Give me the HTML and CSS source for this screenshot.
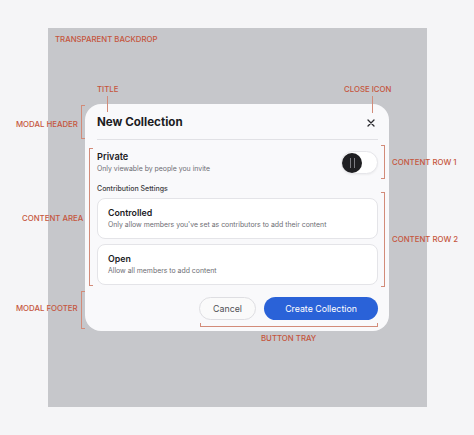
FILE: index.html
```html
<!DOCTYPE html>
<html lang="en">
<head>
    <meta charset="UTF-8">
    <meta name="viewport" content="width=device-width, initial-scale=1.0">
    <title>Modal Anatomy</title>
    <link rel="stylesheet" href="styles.css">
</head>
<body>
    <div class="canvas">
        <!-- Backdrop + Modal -->
        <div class="backdrop">
            <div class="modal">
                <div class="modal-header">
                    <h2 class="modal-title">New Collection</h2>
                    <button class="close" aria-label="Close">
                        <svg width="8" height="8" viewBox="0 0 8 8"><path d="M1 1L7 7M7 1L1 7" stroke="#2a2a2e" stroke-width="1.3" stroke-linecap="round"/></svg>
                    </button>
                </div>

                <div class="modal-body">
                    <div class="row">
                        <div>
                            <div class="row-title">Private</div>
                            <div class="row-desc">Only viewable by people you invite</div>
                        </div>
                        <div class="toggle"><span class="knob"></span></div>
                    </div>

                    <div class="section-label">Contribution Settings</div>

                    <div class="option">
                        <div class="option-title">Controlled</div>
                        <div class="option-desc">Only allow members you've set as contributors to add their content</div>
                    </div>
                    <div class="option">
                        <div class="option-title">Open</div>
                        <div class="option-desc">Allow all members to add content</div>
                    </div>
                </div>

                <div class="modal-footer">
                    <button class="btn btn-cancel">Cancel</button>
                    <button class="btn btn-primary">Create Collection</button>
                </div>
            </div>
        </div>

        <!-- Annotations -->
        <div class="note" style="left:55px; top:34px;">TRANSPARENT BACKDROP</div>

        <div class="note" style="left:97px; top:84px;">TITLE</div>
        <div class="pin" style="left:107px; top:96px; height:16px;"></div>

        <div class="note" style="left:344px; top:84px;">CLOSE ICON</div>
        <div class="pin" style="left:372px; top:96px; height:17px;"></div>

        <div class="note" style="left:16px; top:119px;">MODAL HEADER</div>
        <div class="bracket open" style="left:81px; top:105px; height:34px;"></div>

        <div class="note" style="left:22px; top:213px;">CONTENT AREA</div>
        <div class="bracket open" style="left:89px; top:148px; height:138px;"></div>

        <div class="note" style="left:16px; top:303px;">MODAL FOOTER</div>
        <div class="bracket open" style="left:81px; top:291px; height:38px;"></div>

        <div class="note" style="left:392px; top:157px;">CONTENT ROW 1</div>
        <div class="bracket close-b" style="left:381px; top:145px; height:34px;"></div>

        <div class="note" style="left:392px; top:234px;">CONTENT ROW 2</div>
        <div class="bracket close-b" style="left:381px; top:192px; height:95px;"></div>

        <div class="note" style="left:261px; top:333px;">BUTTON TRAY</div>
        <div class="bracket tray" style="left:200px; top:323px; width:178px;"></div>
    </div>
</body>
</html>
```

FILE: styles.css
```css
/* General */
* {
    box-sizing: border-box;
}
body {
    margin: 0;
    background: #f5f5f7;
    font-family: 'Inter', 'Noto Sans', sans-serif;
    color: #1c1c1f;
}
.canvas {
    position: relative;
    height: 435px;
    padding: 28px 0 0 48px;
}

/* Backdrop */
.backdrop {
    width: 379px;
    height: 379px;
    background: #c6c7cb;
    padding: 76px 0 0 37px;
}

/* Modal */
.modal {
    width: 304px;
    background: #f9f9fb;
    border-radius: 16px;
    padding: 0 11px 11px 12px;
}
.modal-header {
    display: flex;
    align-items: center;
    justify-content: space-between;
    height: 36px;
    padding-top: 1px;
    border-bottom: 1px solid #e1e1e5;
}
.modal-title {
    margin: 0;
    font-size: 11.6px;
    font-weight: 700;
    line-height: 17px;
}
.close {
    border: none;
    background: none;
    padding: 0;
    margin: 2px 3px 0 0;
    display: flex;
}

/* Body */
.modal-body {
    padding-top: 11px;
}
.row {
    display: flex;
    align-items: center;
    justify-content: space-between;
    height: 22px;
}
.row-title {
    font-size: 9.2px;
    font-weight: 600;
    line-height: 13px;
}
.row-desc,
.option-desc {
    font-size: 6.9px;
    line-height: 11px;
    color: #6d6d73;
}
.toggle {
    width: 37px;
    height: 23px;
    border-radius: 12px;
    background: #fff;
    border: 1px solid #e6e6ea;
    box-shadow: 0 1px 2px rgba(0, 0, 0, 0.05);
    padding: 1px 0 0 0;
}
.knob {
    display: block;
    position: relative;
    width: 20px;
    height: 20px;
    border-radius: 50%;
    background: #1f1f22;
}
.knob::after {
    content: "";
    position: absolute;
    left: 8px;
    top: 5px;
    width: 3px;
    height: 10px;
    border-left: 1px solid #7c7c82;
    border-right: 1px solid #7c7c82;
}
.section-label {
    margin: 10px 0 4px;
    font-size: 7px;
    font-weight: 500;
    line-height: 11px;
    color: #3b3b40;
}
.option {
    height: 41px;
    background: #fff;
    border: 1px solid #e4e4e8;
    border-radius: 8px;
    padding: 0 10px;
    display: flex;
    flex-direction: column;
    justify-content: center;
}
.option + .option {
    margin-top: 5px;
}
.option-title {
    font-size: 8.8px;
    font-weight: 600;
    line-height: 12px;
}

/* Footer */
.modal-footer {
    display: flex;
    justify-content: flex-end;
    gap: 8px;
    padding-top: 12px;
}
.btn {
    height: 23px;
    border-radius: 12px;
    font-family: inherit;
    font-size: 8.8px;
    cursor: pointer;
}
.btn-cancel {
    width: 57px;
    background: #fafafa;
    border: 1px solid #dedee2;
    color: #505055;
}
.btn-primary {
    width: 114px;
    background: #2a62d8;
    border: none;
    color: #fff;
}

/* Annotations */
.note {
    position: absolute;
    font-size: 7.8px;
    line-height: 10px;
    font-weight: 500;
    color: #c5553d;
    white-space: nowrap;
}
.pin {
    position: absolute;
    width: 1px;
    background: #d28b79;
}
.bracket {
    position: absolute;
    border: 1px solid #d28b79;
}
.bracket.open {
    width: 4px;
    border-right: none;
}
.bracket.close-b {
    width: 4px;
    border-left: none;
}
.bracket.tray {
    height: 4px;
    border-top: none;
}
```
